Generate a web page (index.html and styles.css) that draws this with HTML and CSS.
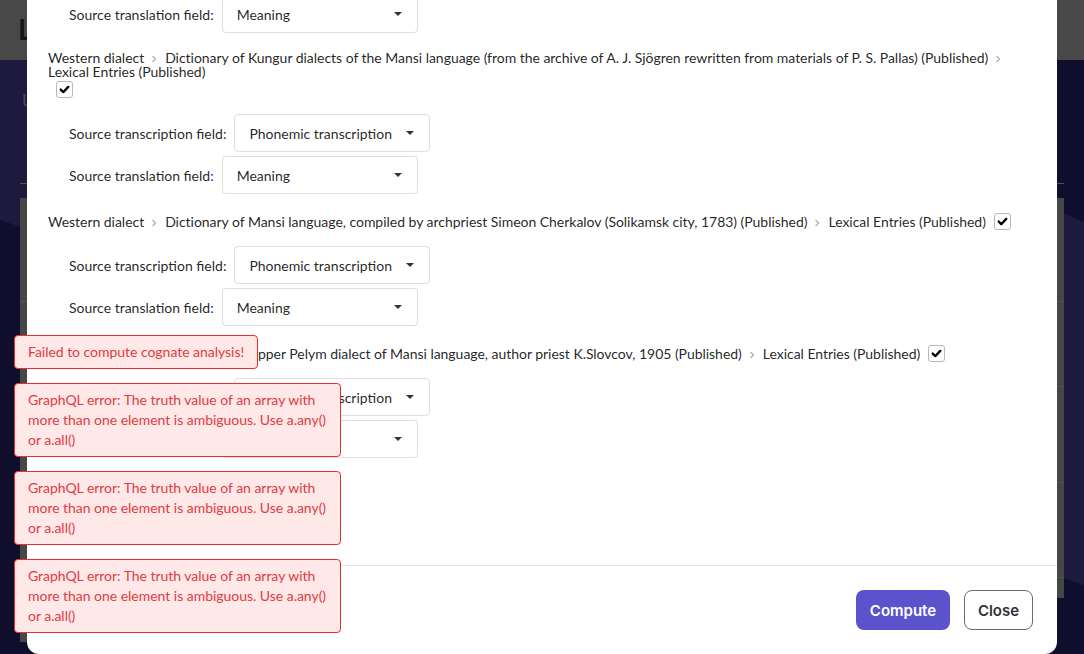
FILE: index.html
```html
<!DOCTYPE html>
<html lang="en">
<head>
<meta charset="utf-8">
<title>Cognate analysis</title>
<link rel="stylesheet" href="styles.css">
</head>
<body>
<div class="page">
  <svg class="wave" viewBox="0 0 1084 654" preserveAspectRatio="none" aria-hidden="true">
    <polygon points="0,60 717,60 1084,222 1084,585 0,220" fill="#1d1a3e"/>
  </svg>
  <header class="topbar"><span class="logo">L</span></header>
  <main class="main">
    <div class="tabs"><span>U</span><span>History</span></div>
    <div class="rule"></div>
    <div class="card">
      <div class="card-row r1"></div>
      <div class="card-row r2"></div>
      <div class="card-row r3"></div>
      <div class="card-row r4"></div>
    </div>
    <div class="card-foot"></div>
  </main>
</div>

<div class="modal">
  <div class="modal-body">
    <div class="content">
      <div class="field"><span class="label">Source translation field:</span><div class="dropdown">Meaning</div></div>

      <div class="section first">
        <div class="crumbs">
          <div class="breadcrumb">Western dialect<svg class="sep" viewBox="0 0 6 8"><path d="M1.5 1l3 3-3 3" fill="none" stroke="#b3b3b3" stroke-width="1.4"/></svg>Dictionary of Kungur dialects of the Mansi language (from the archive of A. J. Sjögren rewritten from materials of P. S. Pallas) (Published)<svg class="sep" viewBox="0 0 6 8"><path d="M1.5 1l3 3-3 3" fill="none" stroke="#b3b3b3" stroke-width="1.4"/></svg>Lexical Entries (Published)</div>
          <span class="check"><svg viewBox="0 0 17 17"><path d="M4.2 8.6l2.9 2.9 5.7-6" fill="none" stroke="#000" stroke-width="2.6" stroke-linecap="round" stroke-linejoin="round"/></svg></span>
        </div>
        <div class="field"><span class="label">Source transcription field:</span><div class="dropdown">Phonemic transcription</div></div>
        <div class="field"><span class="label">Source translation field:</span><div class="dropdown">Meaning</div></div>
      </div>

      <div class="section">
        <div class="crumbs">
          <div class="breadcrumb">Western dialect<svg class="sep" viewBox="0 0 6 8"><path d="M1.5 1l3 3-3 3" fill="none" stroke="#b3b3b3" stroke-width="1.4"/></svg>Dictionary of Mansi language, compiled by archpriest Simeon Cherkalov (Solikamsk city, 1783) (Published)<svg class="sep" viewBox="0 0 6 8"><path d="M1.5 1l3 3-3 3" fill="none" stroke="#b3b3b3" stroke-width="1.4"/></svg>Lexical Entries (Published)</div>
          <span class="check"><svg viewBox="0 0 17 17"><path d="M4.2 8.6l2.9 2.9 5.7-6" fill="none" stroke="#000" stroke-width="2.6" stroke-linecap="round" stroke-linejoin="round"/></svg></span>
        </div>
        <div class="field"><span class="label">Source transcription field:</span><div class="dropdown">Phonemic transcription</div></div>
        <div class="field"><span class="label">Source translation field:</span><div class="dropdown">Meaning</div></div>
      </div>

      <div class="section">
        <div class="crumbs">
          <div class="breadcrumb">Western dialect<svg class="sep" viewBox="0 0 6 8"><path d="M1.5 1l3 3-3 3" fill="none" stroke="#b3b3b3" stroke-width="1.4"/></svg>Dictionary of Upper Pelym dialect of Mansi language, author priest K.Slovcov, 1905 (Published)<svg class="sep" viewBox="0 0 6 8"><path d="M1.5 1l3 3-3 3" fill="none" stroke="#b3b3b3" stroke-width="1.4"/></svg>Lexical Entries (Published)</div>
          <span class="check"><svg viewBox="0 0 17 17"><path d="M4.2 8.6l2.9 2.9 5.7-6" fill="none" stroke="#000" stroke-width="2.6" stroke-linecap="round" stroke-linejoin="round"/></svg></span>
        </div>
        <div class="field"><span class="label">Source transcription field:</span><div class="dropdown">Phonemic transcription</div></div>
        <div class="field"><span class="label">Source translation field:</span><div class="dropdown">Meaning</div></div>
      </div>
    </div>
  </div>
  <div class="modal-actions">
    <button class="btn primary">Compute</button>
    <button class="btn basic">Close</button>
  </div>
</div>

<div class="toasts">
  <div class="toast">Failed to compute cognate analysis!</div>
  <div class="toast">GraphQL error: The truth value of an array with more than one element is ambiguous. Use a.any() or a.all()</div>
  <div class="toast">GraphQL error: The truth value of an array with more than one element is ambiguous. Use a.any() or a.all()</div>
  <div class="toast">GraphQL error: The truth value of an array with more than one element is ambiguous. Use a.any() or a.all()</div>
</div>
</body>
</html>
```

FILE: styles.css
```css
* { box-sizing: border-box; }

html, body {
  margin: 0;
  width: 1084px;
  height: 654px;
  overflow: hidden;
}

body {
  position: relative;
  font-family: Lato, "Noto Sans", sans-serif;
  font-size: 14px;
  background: #100e2d;
}

/* dimmed page behind the modal */
.page {
  position: relative;
  height: 654px;
}

.wave {
  position: absolute;
  inset: 0;
  width: 100%;
  height: 100%;
}

.topbar {
  position: relative;
  height: 60px;
  background: #484848;
  padding: 14px 0 0 18px;
}

.logo {
  font-size: 28px;
  font-weight: 700;
  color: #161616;
  line-height: 30px;
}

.main {
  position: relative;
  padding: 0 20px;
}

.tabs {
  display: flex;
  justify-content: space-between;
  padding: 30px 18px 0 2px;
  height: 123px;
  color: #4c4c4c;
  font-size: 17px;
}

.rule {
  height: 1px;
  background: #505050;
}

.card {
  margin-top: 14px;
  height: 400px;
  background: #464646;
}

.card-row { border-bottom: 1px solid #545454; }
.r1 { height: 104px; }
.r2 { height: 85px; }
.r3 { height: 96px; }
.r4 { height: 95px; }

.card-foot {
  width: 200px;
  height: 44px;
  background: #464646;
}

/* modal */
.modal {
  position: absolute;
  left: 27px;
  top: 0;
  width: 1030px;
  height: 654px;
  background: #fff;
  border-radius: 0 0 12px 12px;
  display: flex;
  flex-direction: column;
  overflow: hidden;
}

.modal-body {
  flex: 1;
  overflow: hidden;
  padding: 0 21px;
  color: rgba(0, 0, 0, 0.87);
}

.content {
  margin-top: -5px;
}

.field {
  display: flex;
  align-items: center;
  gap: 8px;
  padding-left: 21px;
  height: 38px;
}

.field + .field { margin-top: 4px; }

.dropdown {
  position: relative;
  width: 196px;
  height: 38px;
  border: 1px solid rgba(34, 36, 38, 0.15);
  border-radius: 4px;
  padding: 0 30px 0 14px;
  display: flex;
  align-items: center;
  white-space: nowrap;
}

.dropdown::after {
  content: "";
  position: absolute;
  right: 15px;
  top: 50%;
  margin-top: -2px;
  border-left: 4px solid transparent;
  border-right: 4px solid transparent;
  border-top: 4px solid #333;
}

.section { margin-top: 19px; }
.section.first { margin-top: 18px; }

.crumbs {
  display: flex;
  flex-wrap: wrap;
  align-items: center;
  row-gap: 2px;
  margin-bottom: 16px;
}

.breadcrumb {
  line-height: 14px;
  letter-spacing: -0.03px;
}

.sep {
  display: inline-block;
  width: 6px;
  height: 8px;
  margin: 0 8px 0 7px;
  vertical-align: 0;
}

.check {
  width: 17px;
  height: 17px;
  margin-left: 8px;
  border: 1px solid #b8b8b8;
  border-radius: 3px;
  display: flex;
  align-items: center;
  justify-content: center;
}

.check svg {
  width: 15px;
  height: 15px;
}

.modal-actions {
  height: 89px;
  border-top: 1px solid rgba(34, 36, 38, 0.12);
  padding: 24px 24px;
  display: flex;
  justify-content: flex-end;
  gap: 14px;
}

.btn {
  height: 40px;
  border-radius: 8px;
  font-family: Inter, "Noto Sans", sans-serif;
  font-weight: 600;
  font-size: 15px;
  padding: 0;
}

.primary {
  width: 94px;
  background: #5b53cc;
  color: #fff;
  border: none;
}

.basic {
  width: 69px;
  background: #fff;
  color: #333;
  border: 1px solid #6b6b6b;
}

/* toasts */
.toasts {
  position: absolute;
  left: 14px;
  top: 335px;
  display: flex;
  flex-direction: column;
  align-items: flex-start;
  gap: 14px;
}

.toast {
  max-width: 327px;
  padding: 6px 13px;
  background: #ffe8e8;
  border: 1px solid #e8302f;
  border-radius: 4px;
  color: #e23b3f;
  line-height: 20px;
  letter-spacing: -0.03px;
}
```
